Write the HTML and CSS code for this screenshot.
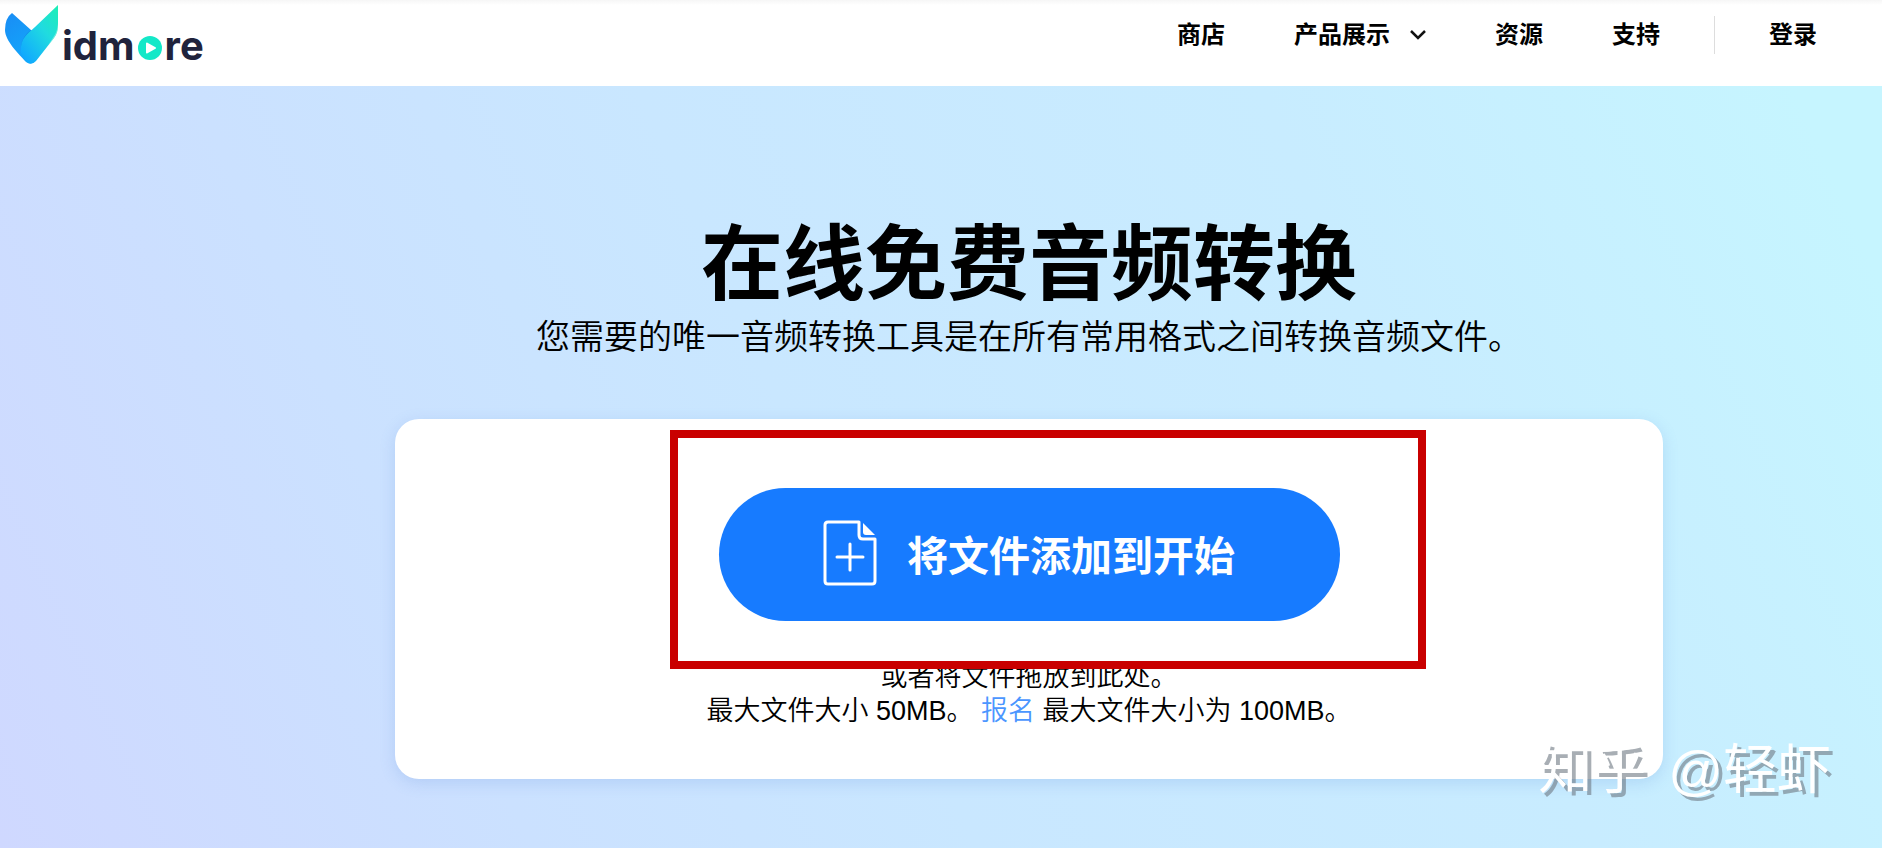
FILE: index.html
```html
<!DOCTYPE html>
<html lang="zh-CN">
<head>
<meta charset="utf-8">
<meta name="viewport" content="width=device-width, initial-scale=1">
<title>在线免费音频转换</title>
<link rel="stylesheet" href="styles.css">
</head>
<body>
<header class="header">
  <a class="logo" href="#">
    <svg class="logo-mark" viewBox="0 0 54 60" aria-hidden="true">
      <defs>
        <linearGradient id="wing-left" x1="0" y1="0" x2="0.6" y2="1">
          <stop offset="0" stop-color="#1a8cf5"/><stop offset="1" stop-color="#12a9fb"/>
        </linearGradient>
        <linearGradient id="wing-right" x1="1" y1="0" x2="0.2" y2="1">
          <stop offset="0" stop-color="#1cf0b4"/><stop offset="0.45" stop-color="#20dbe0"/><stop offset="1" stop-color="#10a8ff"/>
        </linearGradient>
      </defs>
      <path fill="url(#wing-left)" d="M7 8Q0 13 0 25C0 36 14 49 21 57Q26 61 30 56L36 34L26 25Z"/>
      <path fill="#1272d8" opacity=".55" d="M26 25Q17 31 16 42L24 42L30 30Z"/>
      <path fill="url(#wing-right)" d="M53 0L30 22C21 30 15 34 16 48L21 56Q26 61 31 56L49 33Q53 28 53 20Z"/>
      <path fill="#a5f5de" opacity=".55" d="M53 18C52 30 48 31 43 41L49 33Q53 28 53 20Z"/>
    </svg>
    <span class="logo-text">idm<svg class="logo-o" viewBox="0 0 24 24" role="img" aria-label="o"><circle cx="12" cy="12" r="12" fill="#14e8c8"/><path fill="#fff" stroke="#fff" stroke-width="2" stroke-linejoin="round" d="M9 7.500L17 12L9 16.500Z"/></svg>re</span>
  </a>
  <nav class="nav">
    <a href="#">商店</a>
    <button class="nav-menu" type="button">产品展示
      <svg class="chevron" viewBox="0 0 16 10" aria-hidden="true"><path d="M1 1L8 8L15 1" fill="none" stroke="#111" stroke-width="2.500"/></svg>
    </button>
    <a href="#">资源</a>
    <a href="#">支持</a>
    <a class="login" href="#">登录</a>
  </nav>
</header>
<main class="hero">
  <h1 class="title">在线免费音频转换</h1>
  <p class="subtitle">您需要的唯一音频转换工具是在所有常用格式之间转换音频文件。</p>
  <section class="card">
    <button class="upload" type="button">
      <svg class="file-icon" viewBox="0 0 54 66" aria-hidden="true">
        <path fill="none" stroke="#fff" stroke-width="3" stroke-linejoin="round" d="M36 2H5Q2 2 2 5V61Q2 64 5 64H49Q52 64 52 61V19H40Q36 19 36 15Z"/>
        <path fill="#fff" d="M40 3L52 15H43Q40 15 40 12Z"/>
        <path stroke="#fff" stroke-width="3" stroke-linecap="round" d="M14 37H40M27 24V50"/>
      </svg>
      <span>将文件添加到开始</span>
    </button>
    <div class="hint">
      <p>或者将文件拖放到此处。</p>
      <p>最大文件大小 50MB。 <a href="#">报名</a> 最大文件大小为 100MB。</p>
    </div>
    <div class="highlight"></div>
    <div class="watermark"><span>知乎</span><span>@轻虾</span></div>
  </section>
</main>
</body>
</html>
```
FILE: styles.css
```css
* { box-sizing: border-box; }

body {
  display: flex;
  flex-direction: column;
  min-height: 100vh;
  margin: 0;
  color: #000;
  font-family: "Liberation Sans", "Noto Sans CJK SC", sans-serif;
}

h1, p { margin: 0; }
a { color: inherit; text-decoration: none; }
button { border: 0; font: inherit; cursor: pointer; }

.header {
  display: flex;
  justify-content: space-between;
  height: 86px;
  padding: 0 65px 0 5px;
  background: linear-gradient(#f6f6f6, #fff 5px);
}

.logo {
  display: flex;
  align-items: flex-start;
  gap: 3px;
  padding-top: 5px;
}
.logo-mark { width: 54px; height: 60px; }
.logo-text {
  display: flex;
  align-items: baseline;
  padding-top: 17px;
  color: #20233c;
  font: 700 40px/48px Inter, sans-serif;
}
.logo-o { width: 24px; height: 24px; margin: 0 3px; }

.nav {
  display: flex;
  align-items: center;
  height: 70px;
  font-size: 24px;
  font-weight: 700;
  line-height: 38px;
}
.nav a, .nav-menu { margin-left: 69px; }
.nav-menu {
  display: flex;
  align-items: center;
  gap: 20px;
  padding: 0;
  background: none;
  color: inherit;
}
.chevron { width: 16px; height: 10px; }
.nav .login {
  margin-left: 54px;
  padding-left: 54px;
  border-left: 1px solid #ddd;
}

.hero {
  display: flex;
  flex: 1;
  flex-direction: column;
  align-items: center;
  padding: 127px 40px 69px 216px;
  background: linear-gradient(66deg, #cfd8ff 0%, #cbe1ff 24%, #c9e7ff 44%, #c8ecff 72%, #c6f5ff 96%);
}
.title { font-size: 82px; line-height: 104px; }
.subtitle { font-size: 34px; font-weight: 350; line-height: 40px; }

.card {
  position: relative;
  display: flex;
  flex-direction: column;
  align-items: center;
  width: 100%;
  max-width: 1268px;
  margin-top: 62px;
  padding: 69px 24px 51px;
  border-radius: 24px;
  background: #fff;
  box-shadow: 0 4px 16px rgba(80, 130, 210, 0.2);
}

.upload {
  display: flex;
  align-items: center;
  justify-content: center;
  gap: 30px;
  width: 621px;
  max-width: 100%;
  height: 133px;
  padding-bottom: 4px;
  border-radius: 67px;
  background: #177bff;
  color: #fff;
  font-size: 41px;
  font-weight: 700;
}
.file-icon { width: 54px; height: 66px; }

.hint {
  margin-top: 39px;
  font-size: 27px;
  font-weight: 350;
  line-height: 34px;
  text-align: center;
}
.hint a { color: #4b96ff; }

.highlight {
  position: absolute;
  top: 11px;
  left: calc(50% - 359px);
  width: 756px;
  height: 239px;
  border: 8px solid #c90000;
  pointer-events: none;
}

.watermark {
  position: absolute;
  right: -168px;
  bottom: -31px;
  display: flex;
  gap: 22px;
  color: #fff;
  font-size: 54px;
  font-weight: 400;
  line-height: 80px;
  text-shadow: 4px 4px 0 rgba(110, 120, 130, 0.6);
  white-space: nowrap;
}
```
